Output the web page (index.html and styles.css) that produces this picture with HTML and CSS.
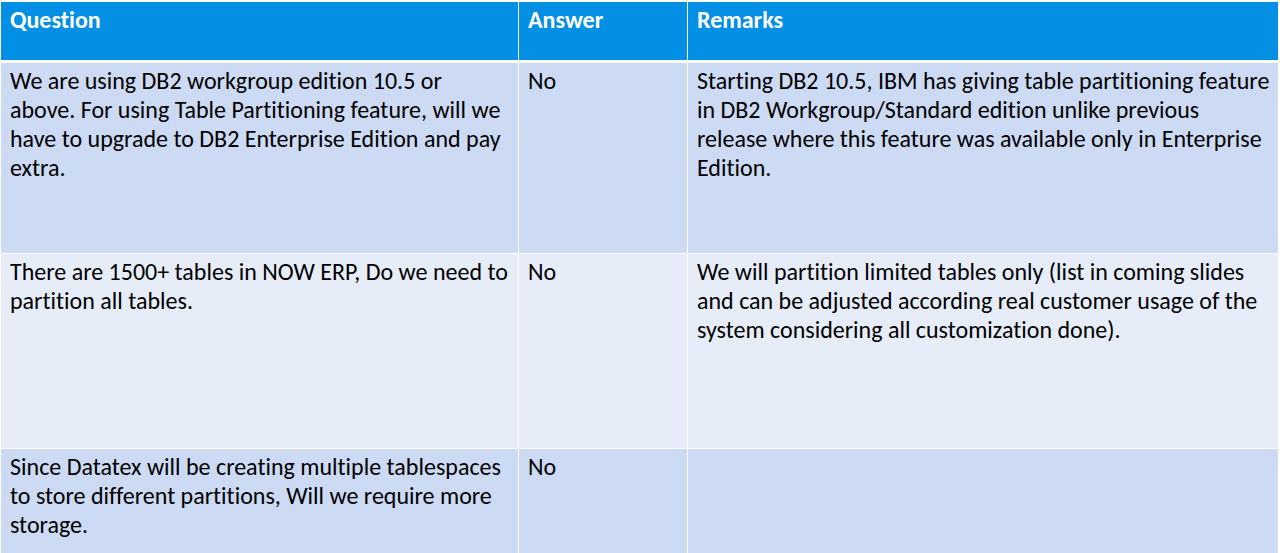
FILE: index.html
```html
<!DOCTYPE html>
<html>
<head>
<meta charset="utf-8">
<link rel="stylesheet" href="styles.css">
</head>
<body>
<div class="qa">
  <div class="cell head">Question</div>
  <div class="cell head">Answer</div>
  <div class="cell head">Remarks</div>

  <div class="cell odd">We are using DB2 workgroup edition 10.5 or above. For using Table Partitioning feature, will we have to upgrade to DB2 Enterprise Edition and pay extra.</div>
  <div class="cell odd">No</div>
  <div class="cell odd">Starting DB2 10.5, IBM has giving table partitioning feature in DB2 Workgroup/Standard edition unlike previous release where this feature was available only in Enterprise Edition.</div>

  <div class="cell even">There are 1500+ tables in NOW ERP, Do we need to partition all tables.</div>
  <div class="cell even">No</div>
  <div class="cell even">We will partition limited tables only (list in coming slides and can be adjusted according real customer usage of the system considering all customization done).</div>

  <div class="cell odd">Since Datatex will be creating multiple tablespaces to store different partitions, Will we require more storage.</div>
  <div class="cell odd">No</div>
  <div class="cell odd"></div>
</div>
</body>
</html>
```

FILE: styles.css
```css
html, body {
  margin: 0;
  padding: 0;
  background: #ffffff;
}
body {
  width: 1280px;
  height: 553px;
  overflow: hidden;
}
.qa {
  display: grid;
  grid-template-columns: 517px 168px 590px;
  grid-template-rows: 60px 190px 194px 104px;
  column-gap: 1px;
  row-gap: 1px;
  margin: 2px 0 0 1px;
  width: 1277px;
  font-family: Carlito, Calibri, "Open Sans", "Liberation Sans", sans-serif;
  font-size: 24px;
  line-height: 29px;
  font-variant-ligatures: none;
  color: #000000;
}
.cell {
  padding: 3px 6px 0 9px;
  overflow: hidden;
}
.head {
  background: #038fe3;
  color: #ffffff;
  font-weight: bold;
  padding-top: 3px;
  border-bottom: 2px solid #ffffff;
}
.odd {
  background: #ccdaf3;
}
.even {
  background: #e7edf8;
}
```
